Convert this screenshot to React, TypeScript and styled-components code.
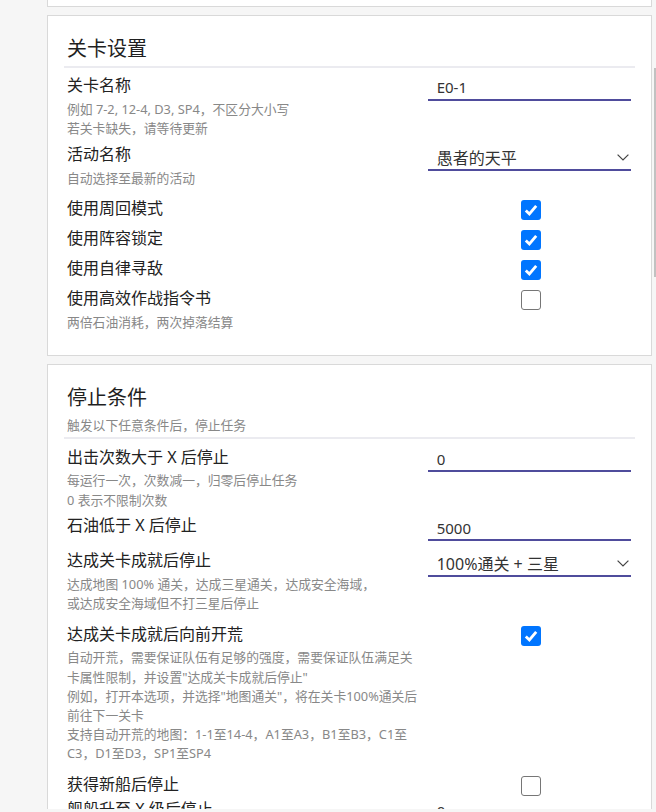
import React from "react";
import styled, { createGlobalStyle } from "styled-components";

const GlobalStyle = createGlobalStyle`
  html, body { margin: 0; padding: 0; background: #f6f6f6; }
  body {
    font-family: "Noto Sans", "Noto Sans CJK SC", sans-serif;
    color: #222;
  }
  * { box-sizing: border-box; }
`;

const Viewport = styled.div`
  position: relative;
  height: 809px;
  overflow: hidden;
  background: #f6f6f6;
`;

const ScrollThumb = styled.div`
  position: absolute;
  right: 0;
  top: 68px;
  width: 2px;
  height: 209px;
  background: #c1c1c1;
`;

const Column = styled.div`
  display: flex;
  flex-direction: column;
  gap: 8px;
  padding: 0 4px 0 47px;
`;

const PanelTail = styled.div`
  height: 7px;
  background: #fff;
  border: 1px solid #d9d9d9;
  border-top: none;
`;

const Panel = styled.section`
  background: #fff;
  border: 1px solid #d9d9d9;
  padding: 17.5px 16px 19.5px;
`;

const Title = styled.h2`
  margin: 0;
  padding: 0 3px;
  font-size: 20px;
  line-height: 30px;
  font-weight: 400;
  color: #1f1f1f;
`;

const Subtitle = styled.div`
  margin-top: 2.9px;
  padding: 0 3px;
  font-size: 12.8px;
  line-height: 19.2px;
  color: #888;
`;

const Divider = styled.div`
  height: 2px;
  background: #ebebf0;
  margin: 2.4px 0 5.3px;
`;

const Row = styled.div<{ $kind: "field" | "check" }>`
  display: grid;
  grid-template-columns: minmax(0, 1fr) 203px;
  column-gap: 10px;
  align-items: start;
  padding: ${(p) => (p.$kind === "check" ? "4.8px" : "0")} 4px 1.2px 3px;
`;

const LabelCol = styled.div`
  display: flex;
  flex-direction: column;
`;

const Label = styled.div`
  font-size: 16px;
  line-height: 24px;
  color: #222;
  white-space: nowrap;
`;

const Desc = styled.div`
  margin: 2.8px 0 2.4px;
  font-size: 12.8px;
  line-height: 19.2px;
  color: #888;
  white-space: nowrap;
`;

const TextInput = styled.input`
  display: block;
  width: 100%;
  height: 27.5px;
  margin: 0 0 5.8px;
  padding: 3px 8.7px 0;
  border: none;
  border-bottom: 2px solid #4f4c9c;
  border-radius: 0;
  background: transparent;
  font-family: "Noto Sans", "Noto Sans CJK SC", sans-serif;
  font-size: 15px;
  color: #333;
  outline: none;
`;

const Select = styled.div`
  display: flex;
  align-items: center;
  justify-content: space-between;
  height: 29px;
  padding: 5px 2px 0 8.7px;
  border-bottom: 2px solid #4f4c9c;
  font-size: 16px;
  line-height: 22px;
  color: #333;
  white-space: nowrap;
`;

const CheckCell = styled.div`
  padding: 4px 0 0 93px;
`;

const Box = styled.span<{ $checked: boolean }>`
  display: flex;
  align-items: center;
  justify-content: center;
  width: 20px;
  height: 20px;
  border-radius: 3px;
  background: ${(p) => (p.$checked ? "#0075ff" : "#fff")};
  border: ${(p) => (p.$checked ? "none" : "1px solid #767676")};
`;

const Chevron = () => (
  <svg width="12" height="7" viewBox="0 0 12 7">
    <polyline points="0.6,0.6 6,6 11.4,0.6" fill="none" stroke="#444" strokeWidth="1.2" />
  </svg>
);

const Check = ({ checked }: { checked: boolean }) => (
  <CheckCell>
    <Box $checked={checked}>
      {checked && (
        <svg width="20" height="20" viewBox="0 0 20 20">
          <path d="M4.8 10.4 L8.4 14 L15.2 5.8" fill="none" stroke="#fff" strokeWidth="2.8" strokeLinejoin="miter" />
        </svg>
      )}
    </Box>
  </CheckCell>
);

type Item =
  | { kind: "input"; label: string; desc?: string[]; value: string }
  | { kind: "select"; label: string; desc?: string[]; value: string }
  | { kind: "check"; label: string; desc?: string[]; checked: boolean };

const stageItems: Item[] = [
  { kind: "input", label: "关卡名称", desc: ["例如 7-2, 12-4, D3, SP4，不区分大小写", "若关卡缺失，请等待更新"], value: "E0-1" },
  { kind: "select", label: "活动名称", desc: ["自动选择至最新的活动"], value: "愚者的天平" },
  { kind: "check", label: "使用周回模式", checked: true },
  { kind: "check", label: "使用阵容锁定", checked: true },
  { kind: "check", label: "使用自律寻敌", checked: true },
  { kind: "check", label: "使用高效作战指令书", desc: ["两倍石油消耗，两次掉落结算"], checked: false },
];

const stopItems: Item[] = [
  { kind: "input", label: "出击次数大于 X 后停止", desc: ["每运行一次，次数减一，归零后停止任务", "0 表示不限制次数"], value: "0" },
  { kind: "input", label: "石油低于 X 后停止", value: "5000" },
  { kind: "select", label: "达成关卡成就后停止", desc: ["达成地图 100% 通关，达成三星通关，达成安全海域，", "或达成安全海域但不打三星后停止"], value: "100%通关 + 三星" },
  {
    kind: "check",
    label: "达成关卡成就后向前开荒",
    desc: [
      "自动开荒，需要保证队伍有足够的强度，需要保证队伍满足关",
      "卡属性限制，并设置\"达成关卡成就后停止\"",
      "例如，打开本选项，并选择\"地图通关\"，将在关卡100%通关后",
      "前往下一关卡",
      "支持自动开荒的地图：1-1至14-4，A1至A3，B1至B3，C1至",
      "C3，D1至D3，SP1至SP4",
    ],
    checked: true,
  },
  { kind: "check", label: "获得新船后停止", checked: false },
  { kind: "input", label: "舰船升至 X 级后停止", value: "0" },
];

const SettingRow = ({ item }: { item: Item }) => (
  <Row $kind={item.kind === "check" ? "check" : "field"}>
    <LabelCol>
      <Label>{item.label}</Label>
      {item.desc && (
        <Desc>
          {item.desc.map((line, i) => (
            <React.Fragment key={i}>
              {i > 0 && <br />}
              {line}
            </React.Fragment>
          ))}
        </Desc>
      )}
    </LabelCol>
    {item.kind === "input" && <TextInput readOnly defaultValue={item.value} />}
    {item.kind === "select" && (
      <Select>
        <span>{item.value}</span>
        <Chevron />
      </Select>
    )}
    {item.kind === "check" && <Check checked={item.checked} />}
  </Row>
);

export default function App() {
  return (
    <>
      <GlobalStyle />
      <Viewport>
        <Column>
          <PanelTail />
          <Panel>
            <Title>关卡设置</Title>
            <Divider />
            {stageItems.map((it, i) => (
              <SettingRow key={i} item={it} />
            ))}
          </Panel>
          <Panel>
            <Title>停止条件</Title>
            <Subtitle>触发以下任意条件后，停止任务</Subtitle>
            <Divider />
            {stopItems.map((it, i) => (
              <SettingRow key={i} item={it} />
            ))}
          </Panel>
        </Column>
        <ScrollThumb />
      </Viewport>
    </>
  );
}
